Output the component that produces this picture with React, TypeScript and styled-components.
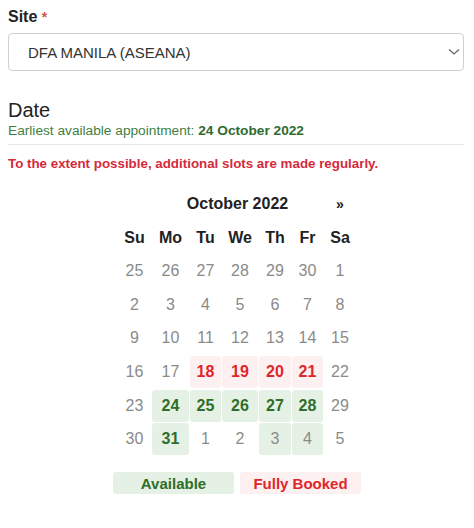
import React from "react";
import styled, { createGlobalStyle } from "styled-components";

const GlobalStyle = createGlobalStyle`
    body {
        margin: 0;
        background: #fff;
        font-family: "Liberation Sans", Arial, sans-serif;
        color: #222;
    }
`;

type DayKind = "muted" | "booked" | "open" | "openMuted";

type Day = { n: number; kind: DayKind };

const muted = (list: number[]): Day[] => list.map((n) => ({ n, kind: "muted" }));

const weeks: Day[][] = [
    muted([25, 26, 27, 28, 29, 30, 1]),
    muted([2, 3, 4, 5, 6, 7, 8]),
    muted([9, 10, 11, 12, 13, 14, 15]),
    [
        { n: 16, kind: "muted" },
        { n: 17, kind: "muted" },
        { n: 18, kind: "booked" },
        { n: 19, kind: "booked" },
        { n: 20, kind: "booked" },
        { n: 21, kind: "booked" },
        { n: 22, kind: "muted" },
    ],
    [
        { n: 23, kind: "muted" },
        { n: 24, kind: "open" },
        { n: 25, kind: "open" },
        { n: 26, kind: "open" },
        { n: 27, kind: "open" },
        { n: 28, kind: "open" },
        { n: 29, kind: "muted" },
    ],
    [
        { n: 30, kind: "muted" },
        { n: 31, kind: "open" },
        { n: 1, kind: "muted" },
        { n: 2, kind: "muted" },
        { n: 3, kind: "openMuted" },
        { n: 4, kind: "openMuted" },
        { n: 5, kind: "muted" },
    ],
];

const dayNames = ["Su", "Mo", "Tu", "We", "Th", "Fr", "Sa"];

function App() {
    return (
        <>
            <GlobalStyle />
            <Page>
                <Label>
                    Site <Required>*</Required>
                </Label>
                <SelectBox>
                    <span>DFA MANILA (ASEANA)</span>
                    <svg width="12" height="8" viewBox="0 0 12 8">
                        <polyline points="1,1.5 6,6 11,1.5" fill="none" stroke="#666" strokeWidth="1.3" />
                    </svg>
                </SelectBox>

                <SectionTitle>Date</SectionTitle>
                <Earliest>
                    Earliest available appointment: <b>24 October 2022</b>
                </Earliest>
                <Rule />
                <Notice>To the extent possible, additional slots are made regularly.</Notice>

                <Calendar>
                    <Nav />
                    <Month>October 2022</Month>
                    <Nav>»</Nav>
                    {dayNames.map((d) => (
                        <DayName key={d}>{d}</DayName>
                    ))}
                    {weeks.flat().map((d, i) => (
                        <Cell key={i} kind={d.kind}>
                            {d.n}
                        </Cell>
                    ))}
                </Calendar>

                <Legend>
                    <LegendItem kind="open">Available</LegendItem>
                    <LegendItem kind="booked">Fully Booked</LegendItem>
                </Legend>
            </Page>
        </>
    );
}

const Page = styled.div`
    padding: 7px 10px 0 8px;
`;

const Label = styled.div`
    font-size: 16px;
    font-weight: bold;
    line-height: 20px;
    color: #222;
`;

const Required = styled.span`
    color: #d9534f;
    font-size: 14px;
    vertical-align: top;
`;

const SelectBox = styled.div`
    margin-top: 6px;
    height: 38px;
    box-sizing: border-box;
    border: 1px solid #cfcfcf;
    border-radius: 4px;
    display: flex;
    align-items: center;
    justify-content: space-between;
    padding: 0 3px 0 19px;
    font-size: 15px;
    color: #333;
`;

const SectionTitle = styled.div`
    margin-top: 27px;
    font-size: 20px;
    line-height: 24px;
    color: #222;
`;

const Earliest = styled.div`
    font-size: 13.7px;
    line-height: 16px;
    color: #3f7f3f;
    margin-top: 1px;

    b {
        color: #2f6b2f;
    }
`;

const Rule = styled.div`
    margin-top: 5px;
    border-top: 1px solid #e6e6e6;
`;

const Notice = styled.div`
    margin-top: 11px;
    font-size: 13.35px;
    line-height: 16px;
    font-weight: bold;
    color: #d42a3c;
`;

const Calendar = styled.div`
    margin: 16px auto 0;
    width: fit-content;
    display: grid;
    grid-template-columns: 33px 37px 31px 36px 32px 31px 32px;
    grid-auto-rows: 32px;
    column-gap: 1px;
    row-gap: 1.6px;
    font-size: 16px;
    position: relative;
    left: 1px;
`;

const Month = styled.div`
    grid-column: span 5;
    display: flex;
    align-items: center;
    justify-content: center;
    font-weight: bold;
    color: #222;
`;

const Nav = styled.div`
    display: flex;
    align-items: center;
    justify-content: center;
    font-weight: bold;
    font-size: 14px;
    color: #222;
`;

const DayName = styled.div`
    display: flex;
    align-items: center;
    justify-content: center;
    font-weight: bold;
    color: #222;
`;

const cellBg: Record<DayKind, string> = {
    muted: "transparent",
    booked: "#fcf0f1",
    open: "#e4f1e4",
    openMuted: "#e4f1e4",
};

const cellColor: Record<DayKind, string> = {
    muted: "#8a8a8a",
    booked: "#e0262c",
    open: "#2f6e2a",
    openMuted: "#8a8a8a",
};

const Cell = styled.div<{ kind: DayKind }>`
    display: flex;
    align-items: center;
    justify-content: center;
    border-radius: 3px;
    background: ${(p) => cellBg[p.kind]};
    color: ${(p) => cellColor[p.kind]};
    font-weight: ${(p) => (p.kind === "booked" || p.kind === "open" ? "bold" : "normal")};
`;

const Legend = styled.div`
    margin: 17px auto 0;
    display: flex;
    justify-content: center;
    gap: 6px;
    position: relative;
    left: 1px;
`;

const LegendItem = styled.div<{ kind: "open" | "booked" }>`
    width: 121px;
    height: 22px;
    border-radius: 3px;
    display: flex;
    align-items: center;
    justify-content: center;
    font-size: 15px;
    font-weight: bold;
    background: ${(p) => cellBg[p.kind]};
    color: ${(p) => cellColor[p.kind]};
`;

export default App;
